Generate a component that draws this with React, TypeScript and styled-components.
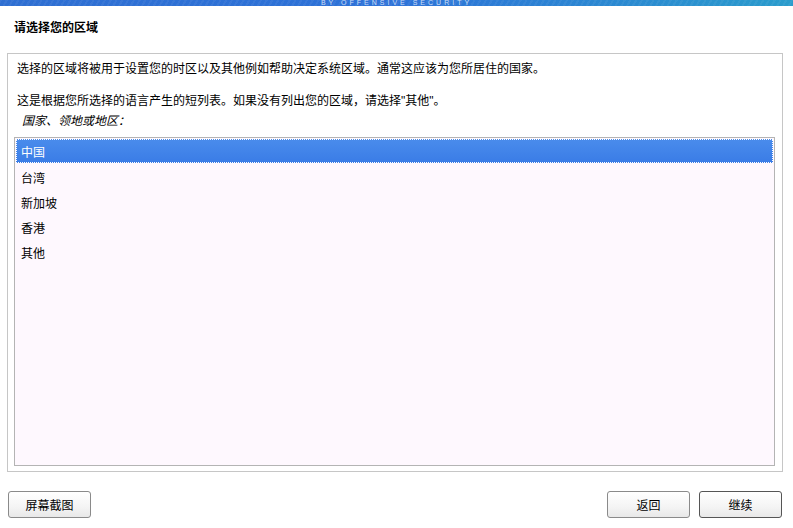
import * as React from 'react'
import styled, { createGlobalStyle } from 'styled-components'

const GlobalStyle = createGlobalStyle`
  html, body {
    margin: 0;
    padding: 0;
    background: #ffffff;
  }
  body {
    font-family: "Liberation Sans", "Noto Sans CJK SC", sans-serif;
    font-size: 12px;
    color: #000;
  }
`

const Page = styled.div`
  width: 793px;
  height: 528px;
  display: flex;
  flex-direction: column;
  overflow: hidden;
`

const Banner = styled.div`
  height: 6px;
  display: flex;
  justify-content: center;
  align-items: flex-start;
  overflow: hidden;
  background:
    repeating-linear-gradient(120deg, rgba(255,255,255,0.05) 0 2px, transparent 2px 5px),
    linear-gradient(90deg, #2f6fd2 0%, #2d72d8 50%, #2a9ccc 100%);
  span {
    font-size: 7px;
    line-height: 6px;
    letter-spacing: 3px;
    color: rgba(255,255,255,0.75);
  }
`

const Title = styled.h1`
  margin: 0;
  padding: 14px 0 0 14px;
  height: 32px;
  box-sizing: border-box;
  font-size: 12px;
  font-weight: bold;
  line-height: 16px;
`

const Panel = styled.div`
  margin: 15px 10px 0 7px;
  height: 419px;
  box-sizing: border-box;
  border: 1px solid #c6c6c6;
  padding: 6px 7px 5px 6px;
  display: flex;
  flex-direction: column;
`

const Para = styled.p<{ $gap?: number }>`
  margin: 0 0 ${p => p.$gap ?? 0}px 3px;
  line-height: 18px;
`

const Label = styled.div`
  margin: 3px 0 8px 8px;
  font-style: italic;
  line-height: 16px;
`

const List = styled.ul`
  flex: 1;
  margin: 0;
  padding: 1px;
  list-style: none;
  border: 1px solid #b4b4b4;
  background: #fef8fe;
`

const Item = styled.li<{ $selected?: boolean }>`
  height: 25px;
  box-sizing: border-box;
  padding: 1px 0 0 5px;
  display: flex;
  align-items: center;
  ${p => p.$selected && `
    height: 24px;
    margin-bottom: 1px;
    color: #fff;
    background: linear-gradient(#4a8cec, #3a7ce6);
    outline: 1px dotted #ffffff;
    outline-offset: -1px;
  `}
`

const Footer = styled.div`
  display: flex;
  align-items: center;
  padding: 19px 11px 0 8px;
  gap: 9px;
`

const Spacer = styled.div`
  flex: 1;
`

const Button = styled.button<{ $default?: boolean }>`
  width: 83px;
  height: 27px;
  font-family: inherit;
  font-size: 12px;
  color: #000;
  border-radius: 3px;
  border: 1px solid ${p => (p.$default ? '#555' : '#8a8a8a')};
  background: linear-gradient(#ffffff, #f4f4f4 60%, #e8e8e8);
  padding: 0;
`

const regions = ['中国', '台湾', '新加坡', '香港', '其他']

export default function App() {
  return (
    <Page>
      <GlobalStyle />
      <Banner><span>BY OFFENSIVE SECURITY</span></Banner>
      <Title>请选择您的区域</Title>
      <Panel>
        <Para $gap={14}>选择的区域将被用于设置您的时区以及其他例如帮助决定系统区域。通常这应该为您所居住的国家。</Para>
        <Para>这是根据您所选择的语言产生的短列表。如果没有列出您的区域，请选择"其他"。</Para>
        <Label>国家、领地或地区：</Label>
        <List>
          {regions.map((r, i) => (
            <Item key={r} $selected={i === 0}>{r}</Item>
          ))}
        </List>
      </Panel>
      <Footer>
        <Button>屏幕截图</Button>
        <Spacer />
        <Button>返回</Button>
        <Button $default>继续</Button>
      </Footer>
    </Page>
  )
}
